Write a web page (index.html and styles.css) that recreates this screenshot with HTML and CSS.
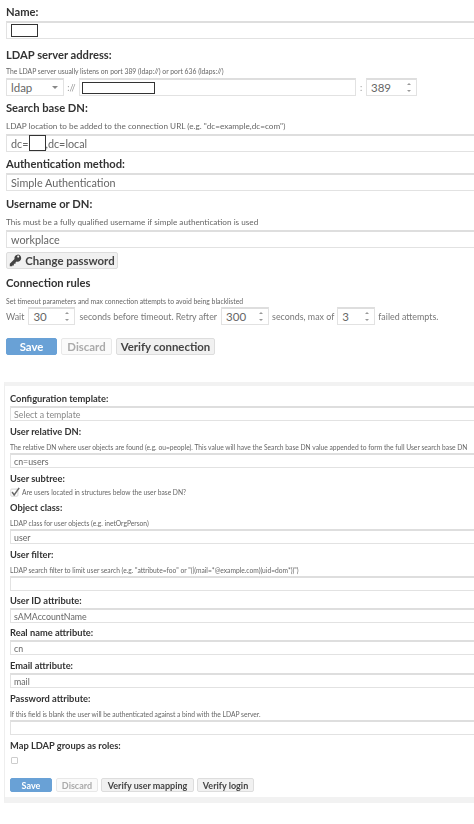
FILE: index.html
```html
<!DOCTYPE html>
<html lang="en">
<head>
    <meta charset="UTF-8">
    <title>LDAP settings</title>
    <link rel="stylesheet" href="styles.css">
</head>
<body>
    <form class="top-form">
        <div class="label name-label">Name:</div>
        <div class="input"><span class="redact redact-name"></span></div>

        <div class="label ldap-label">LDAP server address:</div>
        <div class="help help-small">The LDAP server usually listens on port 389 (ldap://) or port 636 (ldaps://)</div>
        <div class="address-row">
            <div class="input select-proto">ldap<span class="caret"></span></div>
            <span class="sep sep-proto">://</span>
            <div class="input host"><span class="redact redact-host"></span></div>
            <span class="sep sep-colon">:</span>
            <div class="input num port">389<span class="spin"></span></div>
        </div>

        <div class="label base-label">Search base DN:</div>
        <div class="help">LDAP location to be added to the connection URL (e.g. "dc=example,dc=com")</div>
        <div class="input">dc=<span class="redact redact-dc"></span>,dc=local</div>

        <div class="label auth-label">Authentication method:</div>
        <div class="input">Simple Authentication</div>

        <div class="label user-label">Username or DN:</div>
        <div class="help">This must be a fully qualified username if simple authentication is used</div>
        <div class="input">workplace</div>
        <button type="button" class="btn btn-key">
            <svg class="key" viewBox="0 0 16 16" width="13" height="13"><path d="M15 5.2a4.2 4.2 0 0 1-5.6 4L8 10.600v1.400H6v2H4v1H1v-3l5.800-5.800A4.200 4.200 0 1 1 15 5.200zM12.600 3.200a1.300 1.300 0 1 0-2.600 0 1.300 1.300 0 0 0 2.600 0z" fill-rule="evenodd"/></svg>Change password
        </button>

        <div class="label rules-label">Connection rules</div>
        <div class="help help-small">Set timeout parameters and max connection attempts to avoid being blacklisted</div>
        <div class="rules-row">
            Wait
            <div class="input num wait">30<span class="spin"></span></div>
            seconds before timeout. Retry after
            <div class="input num retry">300<span class="spin"></span></div>
            seconds, max of
            <div class="input num max">3<span class="spin"></span></div>
            failed attempts.
        </div>

        <div class="actions">
            <button type="button" class="btn btn-save save-top">Save</button>
            <button type="button" class="btn btn-off discard-top">Discard</button>
            <button type="button" class="btn">Verify connection</button>
        </div>
    </form>

    <form class="panel">
        <div class="label">Configuration template:</div>
        <div class="input placeholder">Select a template</div>

        <div class="label">User relative DN:</div>
        <div class="help">The relative DN where user objects are found (e.g. ou=people). This value will have the Search base DN value appended to form the full User search base DN</div>
        <div class="input">cn=users</div>

        <div class="label">User subtree:</div>
        <div class="help check-row">
            <svg class="check" viewBox="0 0 12 12" width="10" height="10"><rect x="1" y="2.500" width="8.500" height="8.500" rx="1" fill="none" stroke="#ccc"/><path d="M2.500 6 5 9.500 11 1" fill="none" stroke="#666" stroke-width="1.800"/></svg>
            Are users located in structures below the user base DN?
        </div>

        <div class="label">Object class:</div>
        <div class="help">LDAP class for user objects (e.g. inetOrgPerson)</div>
        <div class="input">user</div>

        <div class="label">User filter:</div>
        <div class="help">LDAP search filter to limit user search (e.g. "attribute=foo" or "(|(mail=*@example.com)(uid=dom*))")</div>
        <div class="input"></div>

        <div class="label label-tight">User ID attribute:</div>
        <div class="input">sAMAccountName</div>

        <div class="label label-tight">Real name attribute:</div>
        <div class="input">cn</div>

        <div class="label">Email attribute:</div>
        <div class="input">mail</div>

        <div class="label">Password attribute:</div>
        <div class="help">If this field is blank the user will be authenticated against a bind with the LDAP server.</div>
        <div class="input"></div>

        <div class="label">Map LDAP groups as roles:</div>
        <div class="box-row"><span class="checkbox"></span></div>

        <div class="actions">
            <button type="button" class="btn btn-save">Save</button>
            <button type="button" class="btn btn-off">Discard</button>
            <button type="button" class="btn btn-mapping">Verify user mapping</button>
            <button type="button" class="btn btn-login">Verify login</button>
        </div>
    </form>
</body>
</html>
```

FILE: styles.css
```css
*{
    margin: 0;
    padding: 0;
    box-sizing: border-box;
}
html, body{
    height: 824px;
    overflow: hidden;
}
body{
    background: #fff;
    font-family: "Lato", "Open Sans", sans-serif;
    color: #555;
    filter: blur(0.35px);
}

/* shared bits */
.label{
    font-weight: 700;
    color: #333;
    white-space: nowrap;
}
.help{
    color: #666;
    white-space: nowrap;
}
.input{
    display: flex;
    align-items: center;
    background: #fff;
    border: 1px solid #e2e2e2;
    border-top: 2px solid #dedede;
    color: #666;
}
.redact{
    display: inline-block;
    background: #fff;
    border: 1px solid #333;
}
.btn{
    display: flex;
    align-items: center;
    justify-content: center;
    background: #f1f1f1;
    border: 1px solid #ddd;
    border-radius: 2px;
    font-family: inherit;
    font-weight: 700;
    color: #444;
}
.btn-save{
    background: #69a1d6;
    border-color: #69a1d6;
    color: #fff;
}
.btn-off{
    background: #fafafa;
    border-color: #e8e8e8;
    color: #aaa;
}
.actions{
    display: flex;
}

/* upper form */
.top-form{
    padding: 0 0 0 6px;
    width: 490px;
}
.top-form .label{
    font-size: 11.200px;
    line-height: 16px;
}
.top-form .help{
    font-size: 8.200px;
    line-height: 10px;
}
.top-form .help-small{
    font-size: 6.800px;
}
.top-form > .input{
    height: 18px;
    font-size: 10.800px;
    padding-left: 4px;
}
.address-row .input, .rules-row .input{
    height: 18px;
    font-size: 11.500px;
    padding-left: 4px;
}
.name-label{
    margin-top: 4px;
    margin-bottom: 1px;
}
.redact-name{
    width: 27px;
    height: 13px;
    margin-left: 0;
}
.ldap-label{
    margin-top: 8px;
    margin-bottom: 3px;
}
.address-row{
    display: flex;
    align-items: center;
    margin-top: 2px;
}
.select-proto{
    position: relative;
    width: 58px;
}
.caret{
    position: absolute;
    right: 5px;
    top: 6px;
    border: 3px solid transparent;
    border-top-color: #888;
}
.sep{
    color: #999;
    font-size: 9px;
    text-align: center;
}
.sep-proto{
    width: 15px;
}
.sep-colon{
    width: 10px;
}
.host{
    width: 277px;
}
.redact-host{
    width: 73px;
    height: 12px;
    margin-left: -2px;
}
.num{
    position: relative;
}
.port{
    width: 51px;
}
.spin{
    position: absolute;
    right: 5px;
    top: 3px;
    height: 9px;
}
.spin::before, .spin::after{
    content: "";
    position: absolute;
    right: 0;
    border: 2.500px solid transparent;
}
.spin::before{
    top: -2px;
    border-bottom-color: #999;
}
.spin::after{
    bottom: -2px;
    border-top-color: #999;
}
.base-label{
    margin-top: 4px;
    margin-bottom: 5px;
}
.base-label + .help{
    margin-bottom: 3px;
}
.redact-dc{
    width: 17px;
    height: 16px;
    margin: -2px -1px 0 1px;
}
.auth-label{
    margin-top: 4px;
    margin-bottom: 1px;
}
.user-label{
    margin-top: 5px;
    margin-bottom: 5px;
}
.user-label + .help{
    margin-bottom: 3px;
}
.btn-key{
    margin-top: 4px;
    width: 112px;
    height: 16px;
    font-size: 11.400px;
}
.key{
    fill: #444;
    margin-right: 3px;
}
.top-form .rules-label{
    margin-top: 6px;
    margin-bottom: 5px;
}
.rules-row{
    display: flex;
    align-items: center;
    margin-top: 1px;
    font-size: 8.900px;
    color: #777;
    white-space: nowrap;
}
.wait{
    width: 47px;
    margin: 0 4px 0 4px;
}
.retry{
    width: 48px;
    margin: 0 3px 0 4px;
}
.max{
    width: 38px;
    margin: 0 3px 0 3px;
}
.top-form .actions{
    margin-top: 13px;
    gap: 4px;
}
.top-form .btn{
    height: 17px;
    font-size: 11.400px;
}
.top-form .actions .btn{
    width: 99px;
}
.top-form .actions .save-top, .top-form .actions .discard-top{
    width: 51px;
}

/* lower panel */
.panel{
    margin-top: 27px;
    margin-left: 4px;
    width: 490px;
    height: 421px;
    padding: 2px 0 0 5px;
    border-top: 4px solid #f2f2f2;
    border-left: 1px solid #eee;
    border-bottom: 6px solid #f2f2f2;
}
.panel .label{
    font-size: 9.300px;
    line-height: 13px;
    margin-top: 4px;
}
.panel .label-tight{
    margin-top: 3px;
}
.panel .help{
    font-size: 6.700px;
    line-height: 9px;
    margin-top: 5px;
    margin-bottom: 1px;
}
.panel .input{
    height: 15px;
    padding-left: 3px;
    font-size: 8.800px;
}
.panel .label + .input{
    margin-top: 1px;
}
.placeholder{
    color: #888;
}
.panel .check-row{
    display: flex;
    align-items: center;
    gap: 2px;
    margin-top: 2px;
    margin-bottom: 2px;
}
.box-row{
    height: 18px;
    display: flex;
    align-items: center;
    margin-top: -1px;
}
.checkbox{
    display: block;
    width: 7px;
    height: 7px;
    margin-left: 1px;
    border: 1px solid #ccc;
    border-radius: 1px;
}
.panel .actions{
    margin-top: 9px;
    gap: 3px;
}
.panel .btn{
    height: 14px;
    font-size: 9px;
}
.panel .btn-save{
    width: 42px;
    margin-right: 1px;
}
.panel .btn-off{
    width: 42px;
}
.btn-mapping{
    width: 93px;
}
.btn-login{
    width: 57px;
}
```
